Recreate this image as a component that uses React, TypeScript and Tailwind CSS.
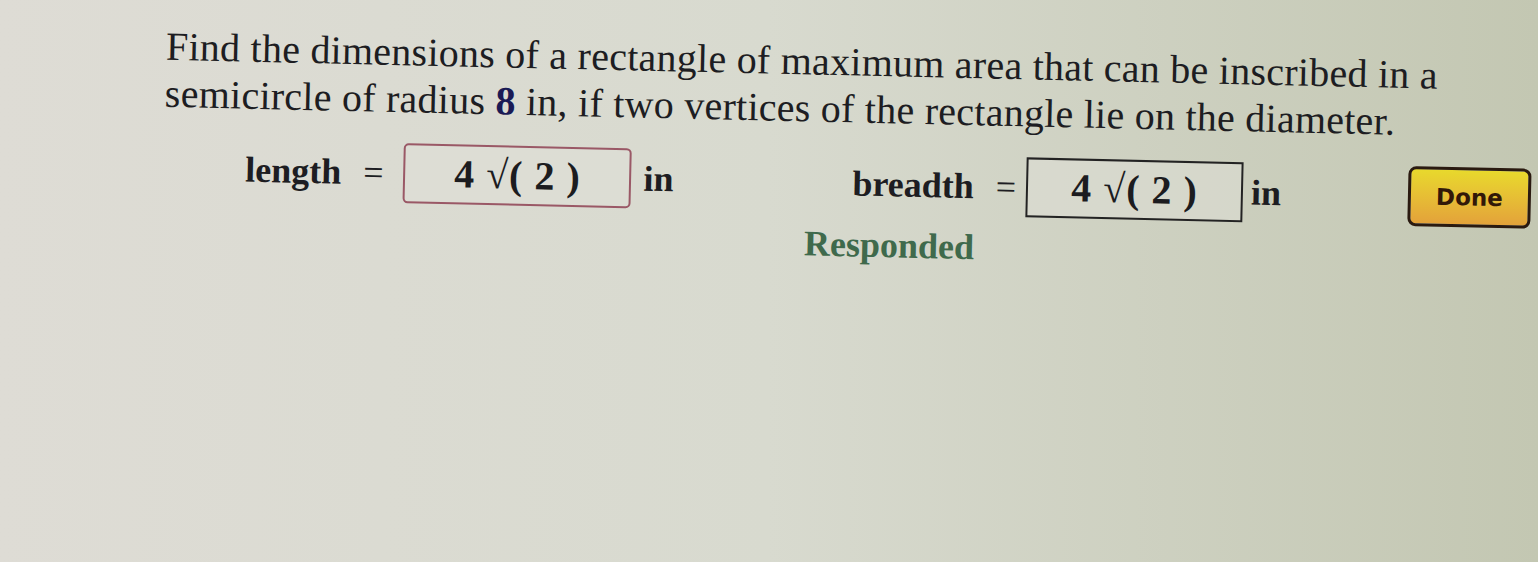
import React from "react"

const serif = { fontFamily: '"Liberation Serif", "Times New Roman", serif' }

const Answer = ({ rounded }: { rounded?: boolean }) => (
  <div
    className={`flex h-[60px] items-center justify-center bg-[#dfe0d8]/50 text-[40px] font-bold tracking-[1px] text-[#1c1c1f] ${
      rounded ? "w-[228px] rounded-[5px] border-2 border-[#9a5866]" : "w-[217px] border-2 border-[#232323]"
    }`}
  >
    4 √( 2 )
  </div>
)

export default function App() {
  return (
    <div className="h-[562px] w-full overflow-hidden bg-linear-to-r from-[#dedcd5] via-[#d8dacf] to-[#c3c7b2]" style={serif}>
      <div className="origin-top-left rotate-[1.3deg] pl-[167px] pt-[19px] text-[#1d1d22]">
        <p className="text-[40px] leading-[47px] tracking-[0.25px]">
          Find the dimensions of a rectangle of maximum area that can be inscribed in a
          <br />
          semicircle of radius <b className="text-[#1a1a55]">8</b> in, if two vertices of the rectangle lie on the diameter.
        </p>

        <div className="mt-[21px] flex items-start">
          <div className="ml-[82px] flex h-[60px] items-center text-[36px] font-bold">
            <span>length</span>
            <span className="ml-[22px] mr-[20px] font-normal">=</span>
            <Answer rounded />
            <span className="ml-[12px]">in</span>
          </div>

          <div className="ml-[132px] flex flex-col">
            <div className="flex h-[60px] items-center pl-[47px] text-[36px] font-bold">
              <span>breadth</span>
              <span className="ml-[22px] mr-[10px] font-normal">=</span>
              <Answer />
              <span className="ml-[8px]">in</span>
            </div>
            <div className="mt-[11px] text-[36px] font-bold leading-[40px] text-[#3f6a4c]">Responded</div>
          </div>

          <button
            className="ml-[127px] flex h-[60px] w-[123px] items-center justify-center rounded-[8px] border-[3px] border-[#2a1a10] bg-linear-to-b from-[#e8d92c] to-[#e3a23a] text-[23px] font-bold text-[#321808]"
            style={{ fontFamily: '"DejaVu Sans", sans-serif' }}
          >
            Done
          </button>
        </div>
      </div>
    </div>
  )
}
